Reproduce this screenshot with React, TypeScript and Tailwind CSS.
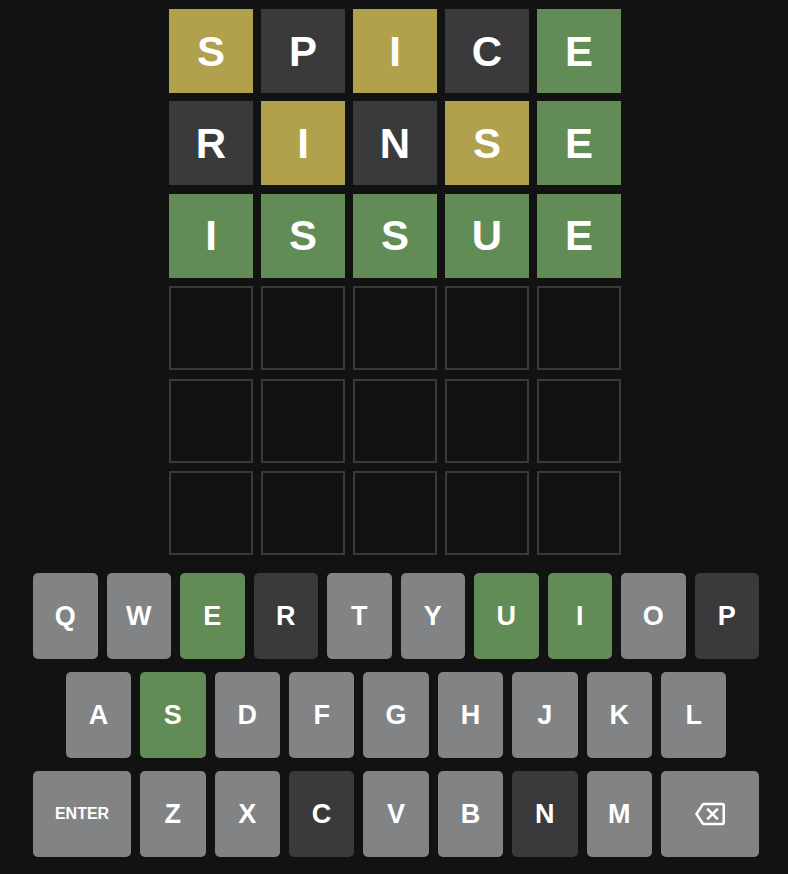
import React from 'react';

type State = 'correct' | 'present' | 'absent' | 'empty';

const GUESSES: [string, State][][] = [
  [['S', 'present'], ['P', 'absent'], ['I', 'present'], ['C', 'absent'], ['E', 'correct']],
  [['R', 'absent'], ['I', 'present'], ['N', 'absent'], ['S', 'present'], ['E', 'correct']],
  [['I', 'correct'], ['S', 'correct'], ['S', 'correct'], ['U', 'correct'], ['E', 'correct']],
];

const TILE_BG: Record<State, string> = {
  correct: 'bg-[#618c55]',
  present: 'bg-[#b1a04c]',
  absent: 'bg-[#3a3a3c]',
  empty: 'border-2 border-[#3a3a3c]',
};

const KEY_STATE: Record<string, State> = {
  E: 'correct',
  U: 'correct',
  I: 'correct',
  S: 'correct',
  R: 'absent',
  P: 'absent',
  C: 'absent',
  N: 'absent',
};

const KEY_BG: Record<State, string> = {
  correct: 'bg-[#618c55]',
  present: 'bg-[#b1a04c]',
  absent: 'bg-[#3a3a3c]',
  empty: 'bg-[#818384]',
};

function BackspaceIcon() {
  return (
    <svg width="30" height="30" viewBox="0 0 24 24" fill="currentColor">
      <path d="M22 3H7c-.69 0-1.23.35-1.59.88L0 12l5.41 8.11c.36.53.9.89 1.59.89h15c1.1 0 2-.9 2-2V5c0-1.1-.9-2-2-2zm0 16H7.07L2.4 12l4.66-7H22v14zm-11.59-2L14 13.41 17.59 17 19 15.59 15.41 12 19 8.41 17.59 7 14 10.59 10.41 7 9 8.41 12.59 12 9 15.59z" />
    </svg>
  );
}

function Key({ k, wide, last }: { k: string; wide?: boolean; last?: boolean }) {
  const state = KEY_STATE[k] ?? 'empty';
  return (
    <button
      className={`${wide ? 'flex-[1.5]' : 'flex-1'} ${last ? '' : 'mr-[9px]'} h-[86px] rounded-[5px] ${KEY_BG[state]} flex items-center justify-center font-bold text-white ${k === 'ENTER' ? 'text-[16px]' : 'text-[27px]'}`}
    >
      {k === 'BACK' ? <BackspaceIcon /> : k}
    </button>
  );
}

export default function App() {
  const rows = [...GUESSES];
  while (rows.length < 6) rows.push(Array(5).fill(['', 'empty']));

  return (
    <div
      className="w-[788px] h-[874px] pl-[2px] bg-[#121213] text-white flex flex-col items-center"
      style={{ fontFamily: '"Liberation Sans", Arial, sans-serif' }}
    >
      {/* Board */}
      <div className="mt-[9px] grid grid-rows-6 gap-y-[8.4px]">
        {rows.map((row, r) => (
          <div key={r} className="flex gap-[8px]">
            {row.map(([letter, state], c) => (
              <div
                key={c}
                className={`w-[84px] h-[84px] flex items-center justify-center text-[42px] font-bold ${TILE_BG[state]}`}
              >
                {letter}
              </div>
            ))}
          </div>
        ))}
      </div>

      {/* Keyboard */}
      <div className="mt-[18px] ml-[2px] w-[726px] flex flex-col gap-[13px]">
        <div className="flex">
          {'QWERTYUIOP'.split('').map((k, i) => (
            <Key key={k} k={k} last={i === 9} />
          ))}
        </div>
        <div className="flex">
          <div className="flex-[0.5]" />
          {'ASDFGHJKL'.split('').map((k, i) => (
            <Key key={k} k={k} last={i === 8} />
          ))}
          <div className="flex-[0.5]" />
        </div>
        <div className="flex">
          <Key k="ENTER" wide />
          {'ZXCVBNM'.split('').map((k) => (
            <Key key={k} k={k} />
          ))}
          <Key k="BACK" wide last />
        </div>
      </div>
    </div>
  );
}
